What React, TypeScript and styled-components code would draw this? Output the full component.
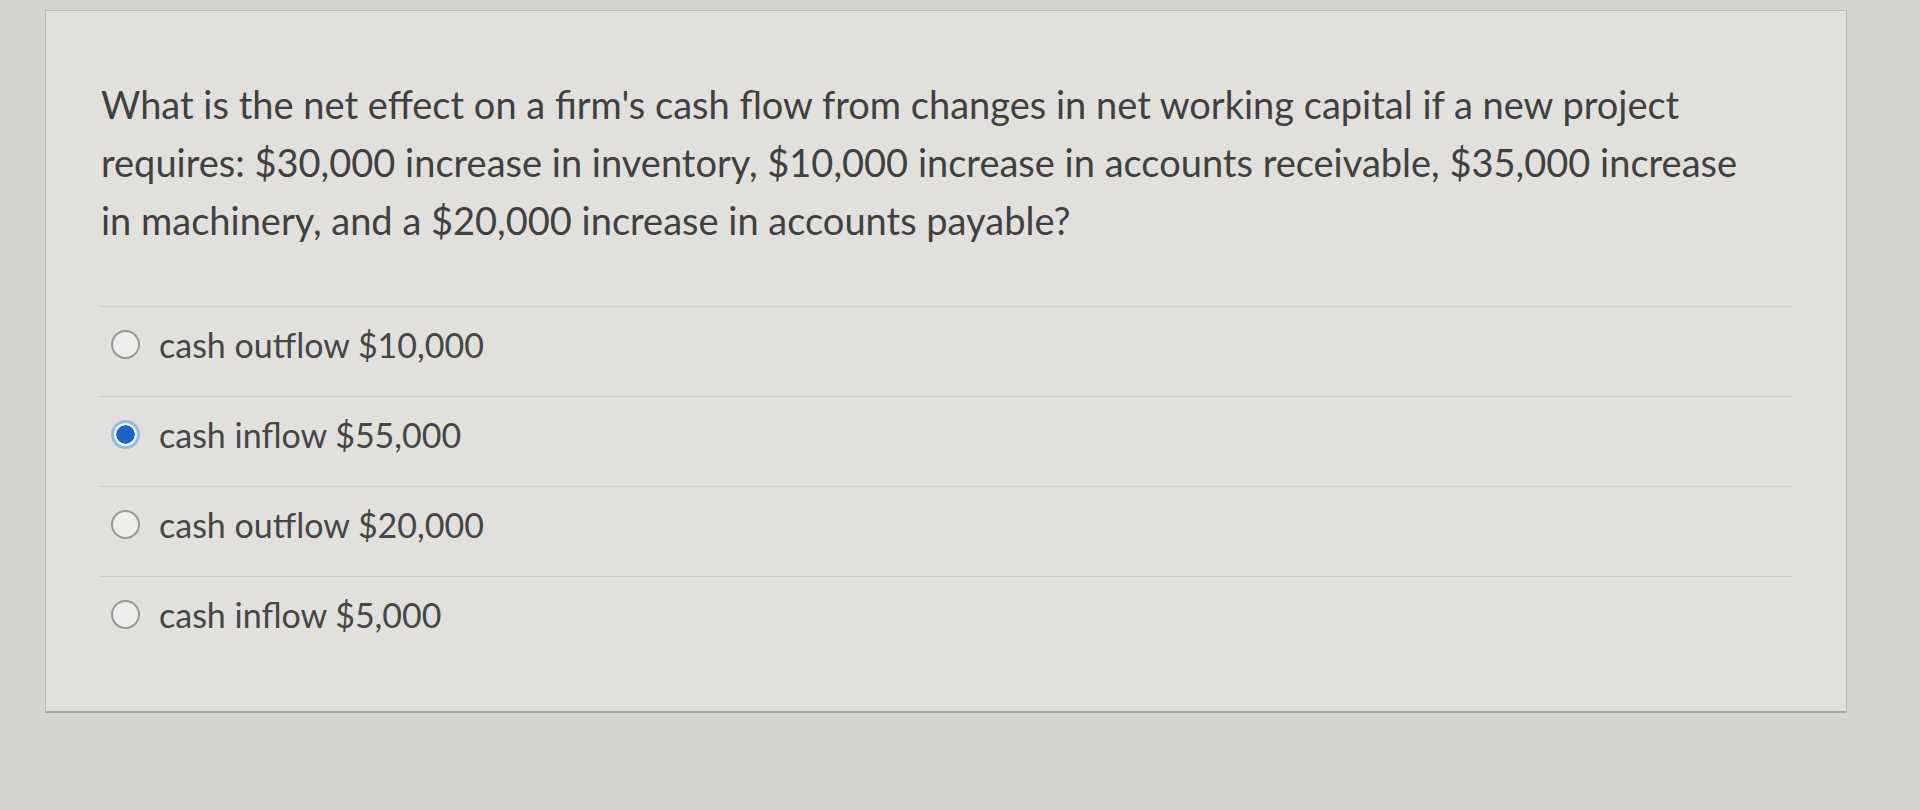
import React, { useState } from 'react'
import styled, { createGlobalStyle } from 'styled-components'

const GlobalStyle = createGlobalStyle`
  html, body {
    margin: 0;
    padding: 0;
    background: #d6d4d0;
    font-family: Lato, 'Open Sans', 'Liberation Sans', sans-serif;
  }
`

const Page = styled.div`
  padding: 10px 73px 0 45px;
  min-height: 810px;
  box-sizing: border-box;
`

const Card = styled.div`
  background: #e1e0dd;
  border: 1px solid #b9b7b4;
  border-bottom: 2px solid #a9a7a4;
  box-sizing: border-box;
  height: 703px;
  padding: 64px 53px 0 53px;
`

const Question = styled.p`
  color: #404040;
  font-size: 38px;
  line-height: 58px;
  margin: 0 0 0 2px;
  white-space: nowrap;
`

const Options = styled.div`
  margin-top: 57px;
`

const OptionRow = styled.label`
  align-items: center;
  border-top: 1px solid #d0cecb;
  box-sizing: border-box;
  cursor: pointer;
  display: flex;
  gap: 19px;
  height: 90px;
  padding: 0 0 14px 12px;
`

const Radio = styled.span<{ $checked: boolean }>`
  border-radius: 50%;
  box-sizing: border-box;
  flex-shrink: 0;
  height: 29px;
  width: 29px;
  border: ${p => (p.$checked ? '3px solid #8fb9e6' : '2px solid #9a9896')};
  background: ${p => (p.$checked ? 'radial-gradient(circle, #1b64c4 0 55%, #f2f4f7 58%)' : '#eeedeb')};
`

const OptionText = styled.span`
  color: #464646;
  font-size: 34px;
`

const options = ['cash outflow $10,000', 'cash inflow $55,000', 'cash outflow $20,000', 'cash inflow $5,000']

export default function App() {
  const [selected, setSelected] = useState(1)

  return (
    <>
      <GlobalStyle />
      <Page>
        <Card>
          <Question>
            What is the net effect on a firm's cash flow from changes in net working capital if a new project
            <br />
            requires: $30,000 increase in inventory, $10,000 increase in accounts receivable, $35,000 increase
            <br />
            in machinery, and a $20,000 increase in accounts payable?
          </Question>
          <Options>
            {options.map((o, i) => (
              <OptionRow key={o} onClick={() => setSelected(i)}>
                <Radio $checked={selected === i} />
                <OptionText>{o}</OptionText>
              </OptionRow>
            ))}
          </Options>
        </Card>
      </Page>
    </>
  )
}
